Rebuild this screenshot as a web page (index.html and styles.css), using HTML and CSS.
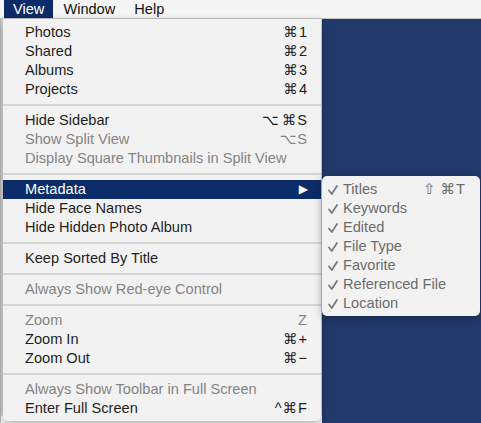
FILE: index.html
```html
<!DOCTYPE html>
<html lang="en">
<head>
  <meta charset="UTF-8">
  <title>View menu</title>
  <link rel="stylesheet" href="styles.css">
</head>
<body>

<div class="menubar">
  <span class="title active">View</span>
  <span class="title">Window</span>
  <span class="title">Help</span>
</div>

<div class="desk">
  <div class="backwin">
    <div class="backrow"></div>
  </div>
  <div class="blue"></div>

  <div class="menu">
    <div class="item"><span>Photos</span><span class="key">⌘1</span></div>
    <div class="item"><span>Shared</span><span class="key">⌘2</span></div>
    <div class="item"><span>Albums</span><span class="key">⌘3</span></div>
    <div class="item"><span>Projects</span><span class="key">⌘4</span></div>
    <div class="sep"></div>
    <div class="item"><span>Hide Sidebar</span><span class="key"><b>⌥</b>⌘S</span></div>
    <div class="item off"><span>Show Split View</span><span class="key">⌥S</span></div>
    <div class="item off"><span>Display Square Thumbnails in Split View</span></div>
    <div class="sep"></div>
    <div class="item hot"><span>Metadata</span><span class="arrow">▶</span></div>
    <div class="item"><span>Hide Face Names</span></div>
    <div class="item"><span>Hide Hidden Photo Album</span></div>
    <div class="sep"></div>
    <div class="item"><span>Keep Sorted By Title</span></div>
    <div class="sep"></div>
    <div class="item off"><span>Always Show Red-eye Control</span></div>
    <div class="sep"></div>
    <div class="item off"><span>Zoom</span><span class="key">Z</span></div>
    <div class="item"><span>Zoom In</span><span class="key">⌘+</span></div>
    <div class="item"><span>Zoom Out</span><span class="key">⌘−</span></div>
    <div class="sep"></div>
    <div class="item off"><span>Always Show Toolbar in Full Screen</span></div>
    <div class="item"><span>Enter Full Screen</span><span class="key">^⌘F</span></div>
  </div>

  <div class="submenu">
    <div class="item"><span class="lbl"><svg class="check" viewBox="0 0 10 10"><path d="M1 5.5l2.8 3.5 5.2-8"/></svg>Titles</span><span class="key"><b class="shift">⇧</b>⌘T</span></div>
    <div class="item"><span class="lbl"><svg class="check" viewBox="0 0 10 10"><path d="M1 5.5l2.8 3.5 5.2-8"/></svg>Keywords</span></div>
    <div class="item"><span class="lbl"><svg class="check" viewBox="0 0 10 10"><path d="M1 5.5l2.8 3.5 5.2-8"/></svg>Edited</span></div>
    <div class="item"><span class="lbl"><svg class="check" viewBox="0 0 10 10"><path d="M1 5.5l2.8 3.5 5.2-8"/></svg>File Type</span></div>
    <div class="item"><span class="lbl"><svg class="check" viewBox="0 0 10 10"><path d="M1 5.5l2.8 3.5 5.2-8"/></svg>Favorite</span></div>
    <div class="item"><span class="lbl"><svg class="check" viewBox="0 0 10 10"><path d="M1 5.5l2.8 3.5 5.2-8"/></svg>Referenced File</span></div>
    <div class="item"><span class="lbl"><svg class="check" viewBox="0 0 10 10"><path d="M1 5.5l2.8 3.5 5.2-8"/></svg>Location</span></div>
  </div>
</div>

</body>
</html>
```

FILE: styles.css
```css
* {
  margin: 0;
  padding: 0;
  box-sizing: border-box;
}

body {
  width: 481px;
  height: 423px;
  overflow: hidden;
  font: 14.6px/19px "Liberation Sans", "DejaVu Sans", sans-serif;
  color: #1e1e1e;
  background: #223a6b;
}

.menubar {
  display: flex;
  height: 19px;
  padding-left: 4px;
  background: #f5f5f5;
  border-bottom: 1px solid #c4c4c4;
}

.title {
  padding: 0 9px;
  line-height: 18px;
  color: #111;
}

.title + .title {
  margin-left: 1px;
}

.title.active {
  background: #0c2c69;
  color: #fff;
}

.desk {
  position: relative;
  display: flex;
  height: 404px;
}

.backwin {
  width: 322px;
  display: flex;
  flex-direction: column;
  justify-content: flex-end;
  background: #d6d6d6;
  border-left: 1px solid #b8b8b8;
}

.backrow {
  height: 8px;
  background: #fafafa;
  border-top: 1px solid #e2e2e2;
}

.blue {
  flex: 1;
  background: #223a6b;
}

.menu {
  position: absolute;
  left: 3px;
  top: 0;
  width: 318px;
  padding: 4px 0 3px;
  background: #f2f2f2;
  border-radius: 0 0 5px 5px;
  box-shadow: 0 3px 8px rgba(0, 0, 0, 0.3);
}

.item {
  display: flex;
  justify-content: space-between;
  height: 19px;
  padding: 0 13px 0 22px;
  white-space: nowrap;
}

.off {
  color: #848484;
}

.hot {
  background: #0c2c69;
  color: #fff;
}

.key {
  letter-spacing: 1px;
}

.key b {
  font-weight: 400;
  margin-right: 2px;
}

.key b.shift {
  margin-right: 4px;
}

.arrow {
  font-size: 12px;
}

.sep {
  height: 12px;
  padding: 5px 0;
}

.sep::after {
  content: "";
  display: block;
  height: 2px;
  background: #d5d5d5;
}

.submenu {
  position: absolute;
  left: 322px;
  top: 157px;
  width: 158px;
  padding: 4px 0 3px;
  background: #f2f2f2;
  color: #6c6c6c;
  border-radius: 5px;
  box-shadow: 0 2px 8px rgba(0, 0, 0, 0.3);
}

.submenu .item {
  padding: 0 14px 0 6px;
}

.lbl {
  display: flex;
  align-items: center;
}

.check {
  width: 10px;
  height: 10px;
  margin-right: 5px;
  fill: none;
  stroke: #777;
  stroke-width: 1.7;
  stroke-linecap: round;
  stroke-linejoin: round;
}
```
